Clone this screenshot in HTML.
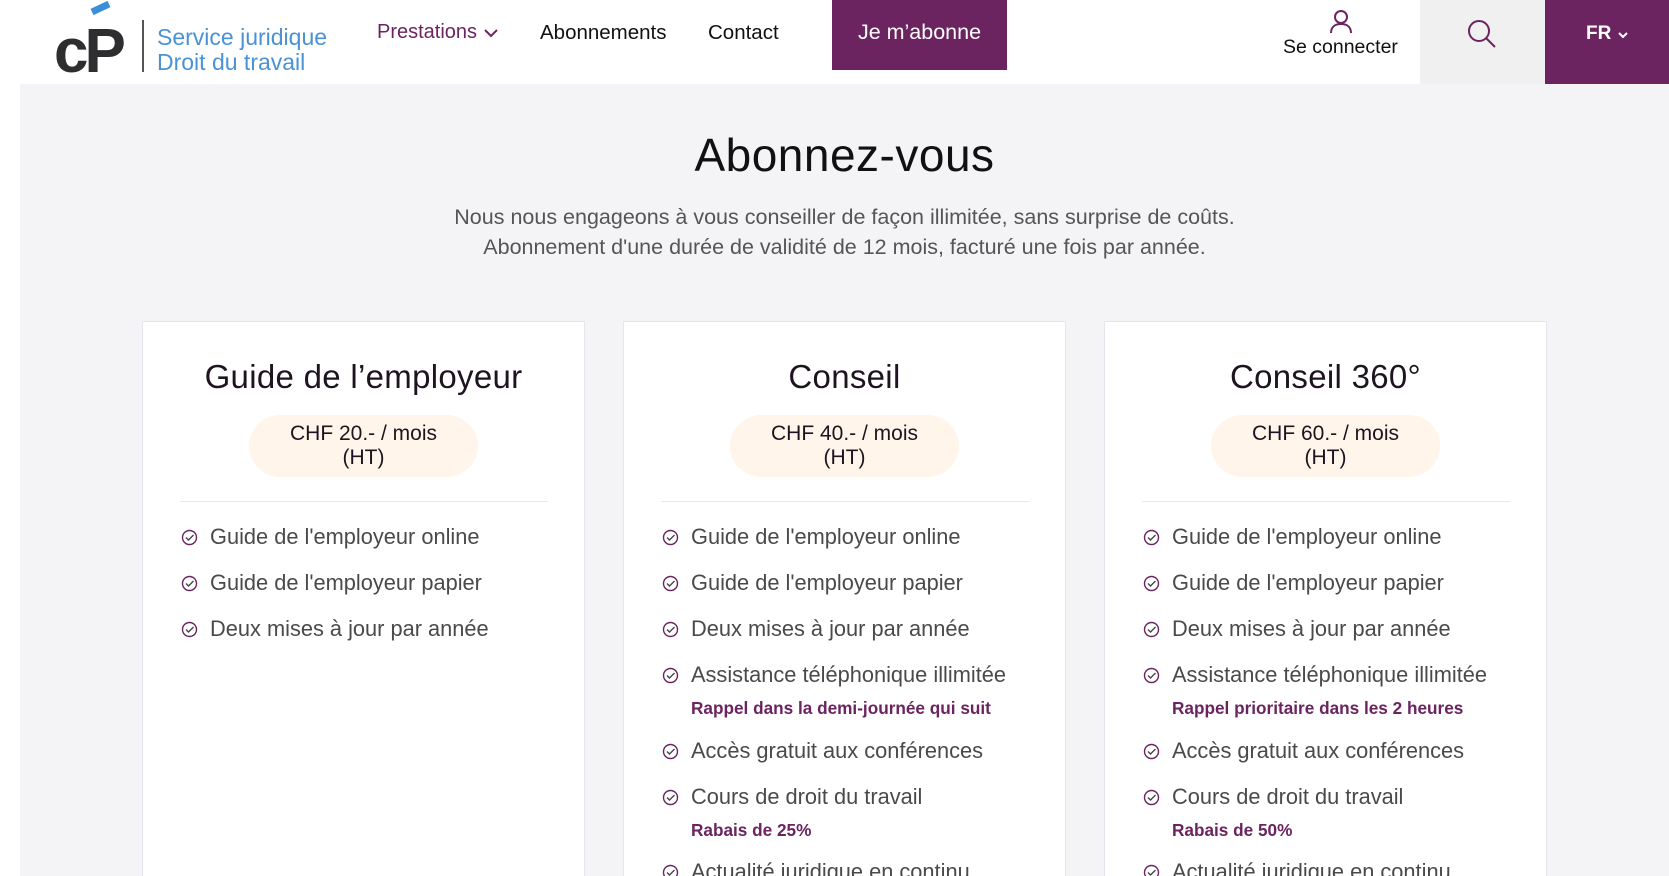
<!DOCTYPE html>
<html><head><meta charset="utf-8"><style>
*{margin:0;padding:0;box-sizing:border-box}
html,body{width:1669px;height:876px;overflow:hidden}
body{background:#fff;font-family:"Liberation Sans",sans-serif;position:relative}
.a{position:absolute;white-space:nowrap}
.main{position:absolute;left:20px;top:84px;width:1649px;height:792px;background:#f4f4f7}
.card{position:absolute;top:321px;width:443px;height:555px;background:#fff;border:1px solid #e8e4ee;border-bottom:none}
.card h2{position:absolute;top:36px;left:0;width:100%;text-align:center;font-size:33px;font-weight:normal;color:#1e1420;letter-spacing:.3px}
.pill{position:absolute;top:93px;left:106px;width:229px;height:62px;border-radius:31px;background:#fff5ea;text-align:center;font-size:21px;line-height:24px;padding-top:7px;color:#1e1420}
.hr{position:absolute;top:179px;left:37px;width:368px;height:1px;background:#e8e6f0}
.li{position:absolute;left:67px;font-size:21.8px;color:#4a4a4a;white-space:nowrap}
.sub{position:absolute;left:67px;font-size:17.2px;font-weight:bold;color:#6b2460;white-space:nowrap}
.ck{position:absolute;left:38px;width:17px;height:17px}
</style></head><body>
<svg class="a" style="left:56px;top:0" width="80" height="76" viewBox="0 0 80 76">
<path d="M36 12 L53 4" stroke="#3b8fd8" stroke-width="7"/>
<text x="-2" y="72" font-family="Liberation Sans" font-weight="bold" font-size="62" fill="#2e2e30" letter-spacing="-4">cP</text>
</svg>
<div class="a" style="left:142px;top:20px;width:2px;height:52px;background:#555"></div>
<div class="a" style="left:157px;top:25px;font-size:23px;line-height:25px;color:#4b92d4">Service juridique<br>Droit du travail</div>
<div class="a" style="left:377px;top:21px;font-size:20px;color:#6b2460">Prestations <svg width="16" height="10" viewBox="0 0 16 10"><path d="M2 2l6 6 6-6" fill="none" stroke="#6b2460" stroke-width="2"/></svg></div>
<div class="a" style="left:540px;top:21px;font-size:20.5px;color:#111">Abonnements</div>
<div class="a" style="left:708px;top:21px;font-size:20.5px;color:#111">Contact</div>
<div class="a" style="left:832px;top:0;width:175px;height:70px;background:#6b2460;color:#fff;font-size:21.5px;text-align:center;line-height:64px">Je m’abonne</div>
<svg class="a" style="left:1329px;top:9px" width="24" height="26" viewBox="0 0 24 26"><circle cx="12" cy="8" r="6" fill="none" stroke="#6b2460" stroke-width="2"/><path d="M2 24c0-6 4-9 10-9s10 3 10 9" fill="none" stroke="#6b2460" stroke-width="2"/></svg>
<div class="a" style="left:1283px;top:36px;font-size:19.5px;color:#111">Se connecter</div>
<div class="a" style="left:1420px;top:0;width:125px;height:84px;background:#f0f0f0"></div>
<svg class="a" style="left:1467px;top:19px" width="32" height="30" viewBox="0 0 32 30"><circle cx="12" cy="12" r="10" fill="none" stroke="#6b2460" stroke-width="2"/><path d="M19 19l9 9" stroke="#6b2460" stroke-width="2"/></svg>
<div class="a" style="left:1545px;top:0;width:124px;height:84px;background:#6b2460"></div>
<div class="a" style="left:1586px;top:23px;font-size:19px;font-weight:bold;color:#fff">FR <svg width="12" height="8" viewBox="0 0 12 8"><path d="M2 2l4 4 4-4" fill="none" stroke="#fff" stroke-width="2"/></svg></div>
<div class="main"></div>
<div class="a" style="left:0;width:1669px;top:128px;text-align:center;font-size:46px;color:#111;letter-spacing:.5px;padding-left:20px">Abonnez-vous</div>
<div class="a" style="left:0;width:1669px;top:202px;text-align:center;font-size:21.5px;line-height:30px;color:#555;padding-left:20px">Nous nous engageons à vous conseiller de façon illimitée, sans surprise de coûts.<br>Abonnement d'une durée de validité de 12 mois, facturé une fois par année.</div>

<div class="card" style="left:142px">
<h2>Guide de l’employeur</h2><div class="pill">CHF 20.- / mois<br>(HT)</div><div class="hr"></div>
<svg class="ck" style="top:207px" viewBox="0 0 17 17"><circle cx="8.5" cy="8.5" r="7" fill="none" stroke="#6b2460" stroke-width="1.4"/><path d="M5 8.5l2.5 2.5 5-5" fill="none" stroke="#444" stroke-width="1.4"/></svg><div class="li" style="top:202px">Guide de l'employeur online</div>
<svg class="ck" style="top:253px" viewBox="0 0 17 17"><circle cx="8.5" cy="8.5" r="7" fill="none" stroke="#6b2460" stroke-width="1.4"/><path d="M5 8.5l2.5 2.5 5-5" fill="none" stroke="#444" stroke-width="1.4"/></svg><div class="li" style="top:248px">Guide de l'employeur papier</div>
<svg class="ck" style="top:299px" viewBox="0 0 17 17"><circle cx="8.5" cy="8.5" r="7" fill="none" stroke="#6b2460" stroke-width="1.4"/><path d="M5 8.5l2.5 2.5 5-5" fill="none" stroke="#444" stroke-width="1.4"/></svg><div class="li" style="top:294px">Deux mises à jour par année</div>
</div>

<div class="card" style="left:623px">
<h2>Conseil</h2><div class="pill">CHF 40.- / mois<br>(HT)</div><div class="hr"></div>
<svg class="ck" style="top:207px" viewBox="0 0 17 17"><circle cx="8.5" cy="8.5" r="7" fill="none" stroke="#6b2460" stroke-width="1.4"/><path d="M5 8.5l2.5 2.5 5-5" fill="none" stroke="#444" stroke-width="1.4"/></svg><div class="li" style="top:202px">Guide de l'employeur online</div>
<svg class="ck" style="top:253px" viewBox="0 0 17 17"><circle cx="8.5" cy="8.5" r="7" fill="none" stroke="#6b2460" stroke-width="1.4"/><path d="M5 8.5l2.5 2.5 5-5" fill="none" stroke="#444" stroke-width="1.4"/></svg><div class="li" style="top:248px">Guide de l'employeur papier</div>
<svg class="ck" style="top:299px" viewBox="0 0 17 17"><circle cx="8.5" cy="8.5" r="7" fill="none" stroke="#6b2460" stroke-width="1.4"/><path d="M5 8.5l2.5 2.5 5-5" fill="none" stroke="#444" stroke-width="1.4"/></svg><div class="li" style="top:294px">Deux mises à jour par année</div>
<svg class="ck" style="top:345px" viewBox="0 0 17 17"><circle cx="8.5" cy="8.5" r="7" fill="none" stroke="#6b2460" stroke-width="1.4"/><path d="M5 8.5l2.5 2.5 5-5" fill="none" stroke="#444" stroke-width="1.4"/></svg><div class="li" style="top:340px">Assistance téléphonique illimitée</div>
<div class="sub" style="top:376px">Rappel dans la demi-journée qui suit</div>
<svg class="ck" style="top:421px" viewBox="0 0 17 17"><circle cx="8.5" cy="8.5" r="7" fill="none" stroke="#6b2460" stroke-width="1.4"/><path d="M5 8.5l2.5 2.5 5-5" fill="none" stroke="#444" stroke-width="1.4"/></svg><div class="li" style="top:416px">Accès gratuit aux conférences</div>
<svg class="ck" style="top:467px" viewBox="0 0 17 17"><circle cx="8.5" cy="8.5" r="7" fill="none" stroke="#6b2460" stroke-width="1.4"/><path d="M5 8.5l2.5 2.5 5-5" fill="none" stroke="#444" stroke-width="1.4"/></svg><div class="li" style="top:462px">Cours de droit du travail</div>
<div class="sub" style="top:498px">Rabais de 25%</div>
<svg class="ck" style="top:542px" viewBox="0 0 17 17"><circle cx="8.5" cy="8.5" r="7" fill="none" stroke="#6b2460" stroke-width="1.4"/><path d="M5 8.5l2.5 2.5 5-5" fill="none" stroke="#444" stroke-width="1.4"/></svg><div class="li" style="top:537px">Actualité juridique en continu</div>
</div>

<div class="card" style="left:1104px">
<h2>Conseil 360°</h2><div class="pill">CHF 60.- / mois<br>(HT)</div><div class="hr"></div>
<svg class="ck" style="top:207px" viewBox="0 0 17 17"><circle cx="8.5" cy="8.5" r="7" fill="none" stroke="#6b2460" stroke-width="1.4"/><path d="M5 8.5l2.5 2.5 5-5" fill="none" stroke="#444" stroke-width="1.4"/></svg><div class="li" style="top:202px">Guide de l'employeur online</div>
<svg class="ck" style="top:253px" viewBox="0 0 17 17"><circle cx="8.5" cy="8.5" r="7" fill="none" stroke="#6b2460" stroke-width="1.4"/><path d="M5 8.5l2.5 2.5 5-5" fill="none" stroke="#444" stroke-width="1.4"/></svg><div class="li" style="top:248px">Guide de l'employeur papier</div>
<svg class="ck" style="top:299px" viewBox="0 0 17 17"><circle cx="8.5" cy="8.5" r="7" fill="none" stroke="#6b2460" stroke-width="1.4"/><path d="M5 8.5l2.5 2.5 5-5" fill="none" stroke="#444" stroke-width="1.4"/></svg><div class="li" style="top:294px">Deux mises à jour par année</div>
<svg class="ck" style="top:345px" viewBox="0 0 17 17"><circle cx="8.5" cy="8.5" r="7" fill="none" stroke="#6b2460" stroke-width="1.4"/><path d="M5 8.5l2.5 2.5 5-5" fill="none" stroke="#444" stroke-width="1.4"/></svg><div class="li" style="top:340px">Assistance téléphonique illimitée</div>
<div class="sub" style="top:376px">Rappel prioritaire dans les 2 heures</div>
<svg class="ck" style="top:421px" viewBox="0 0 17 17"><circle cx="8.5" cy="8.5" r="7" fill="none" stroke="#6b2460" stroke-width="1.4"/><path d="M5 8.5l2.5 2.5 5-5" fill="none" stroke="#444" stroke-width="1.4"/></svg><div class="li" style="top:416px">Accès gratuit aux conférences</div>
<svg class="ck" style="top:467px" viewBox="0 0 17 17"><circle cx="8.5" cy="8.5" r="7" fill="none" stroke="#6b2460" stroke-width="1.4"/><path d="M5 8.5l2.5 2.5 5-5" fill="none" stroke="#444" stroke-width="1.4"/></svg><div class="li" style="top:462px">Cours de droit du travail</div>
<div class="sub" style="top:498px">Rabais de 50%</div>
<svg class="ck" style="top:542px" viewBox="0 0 17 17"><circle cx="8.5" cy="8.5" r="7" fill="none" stroke="#6b2460" stroke-width="1.4"/><path d="M5 8.5l2.5 2.5 5-5" fill="none" stroke="#444" stroke-width="1.4"/></svg><div class="li" style="top:537px">Actualité juridique en continu</div>
</div>
</body></html>
